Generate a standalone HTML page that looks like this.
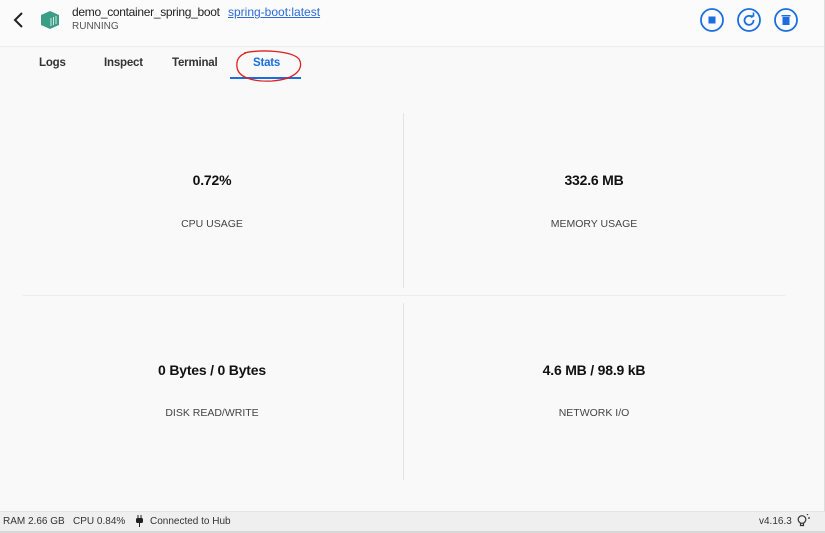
<!DOCTYPE html>
<html><head><meta charset="utf-8"><style>
*{margin:0;padding:0;box-sizing:border-box}
body{width:825px;height:533px;background:#f9f9f9;font-family:"Liberation Sans",sans-serif;position:relative;overflow:hidden;color:#222}
.a{position:absolute}
.v{font-size:14px;font-weight:bold;color:#111;text-align:center;width:380px;letter-spacing:-0.2px}
.l{font-size:10.5px;color:#444;text-align:center;width:380px}
.tab{font-size:11.5px;font-weight:bold;color:#333;top:57px;letter-spacing:-0.2px}
</style></head><body>
<div class="a" style="left:0;top:0;width:825px;height:47px;background:#fbfbfb;border-bottom:1px solid #ececec"></div>
<svg class="a" style="left:10px;top:10px" width="16" height="20"><path d="M12 3 L5 10 L12 17" stroke="#222" stroke-width="2" fill="none"/></svg>
<svg class="a" style="left:39px;top:10px" width="22" height="20"><polygon points="11,1 20,5 20,15 11,19 2,15 2,5" fill="#3a9e86"/><path d="M12 8v8M14.5 7v8M17 6v8" stroke="#cde9e1" stroke-width="1"/></svg>
<div class="a" style="left:72px;top:5px;font-size:12px;color:#222;letter-spacing:-0.3px">demo_container_spring_boot</div>
<div class="a" style="left:228px;top:5px;font-size:12px;color:#2a6cd6;text-decoration:underline">spring-boot:latest</div>
<div class="a" style="left:72px;top:21px;font-size:10px;color:#555">RUNNING</div>
<svg class="a" style="left:699px;top:7px" width="100" height="26" fill="none" stroke="#1a6ee0" stroke-width="1.8">
<circle cx="13" cy="13" r="11"/><rect x="9.5" y="9.5" width="7" height="7" fill="#1a6ee0" stroke="none"/>
<circle cx="50" cy="13" r="11"/><path d="M53.5 10.5 A4.5 4.5 0 1 0 54.5 13"/><path d="M51 9h3.5v-3.5" stroke-width="1.6"/>
<circle cx="87" cy="13" r="11"/><rect x="83.5" y="10" width="7" height="8" fill="#1a6ee0" stroke="none"/><rect x="82.5" y="8" width="9" height="1.5" fill="#1a6ee0" stroke="none"/>
</svg>
<div class="a tab" style="left:39px">Logs</div>
<div class="a tab" style="left:104px">Inspect</div>
<div class="a tab" style="left:172px">Terminal</div>
<div class="a tab" style="left:253px;color:#1a6ee0">Stats</div>
<div class="a" style="left:230px;top:77px;width:71px;height:2px;background:#1a6ee0"></div>
<svg class="a" style="left:232px;top:49px" width="74" height="36"><path d="M12 4 C30 0 60 2 67 10 C72 18 66 30 40 32 C20 33 6 28 5 18 C4 10 8 6 14 4" stroke="#e02020" stroke-width="1.3" fill="none"/></svg>
<div class="a" style="left:403px;top:113px;width:1px;height:175px;background:#e3e3e3"></div>
<div class="a" style="left:403px;top:303px;width:1px;height:177px;background:#e3e3e3"></div>
<div class="a" style="left:23px;top:295px;width:762px;height:1px;background:#ececec"></div>
<div class="a" style="left:824px;top:0;width:1px;height:512px;background:#ddd"></div>
<div class="a v" style="left:22px;top:172px">0.72%</div>
<div class="a l" style="left:22px;top:218px">CPU USAGE</div>
<div class="a v" style="left:404px;top:172px">332.6 MB</div>
<div class="a l" style="left:404px;top:218px">MEMORY USAGE</div>
<div class="a v" style="left:22px;top:362px">0 Bytes / 0 Bytes</div>
<div class="a l" style="left:22px;top:407px">DISK READ/WRITE</div>
<div class="a v" style="left:404px;top:362px">4.6 MB / 98.9 kB</div>
<div class="a l" style="left:404px;top:407px">NETWORK I/O</div>
<div class="a" style="left:0;top:511px;width:825px;height:20px;background:#efefef;border-top:1px solid #e4e4e4;font-size:10px;color:#333"></div>
<div class="a" style="left:0;top:531px;width:825px;height:2px;background:#d8d8d8"></div>
<div class="a" style="left:3px;top:516px;font-size:10px;color:#333">RAM 2.66 GB&nbsp;&nbsp;&nbsp;CPU 0.84%</div>
<svg class="a" style="left:135px;top:515px" width="9" height="12"><path d="M3 0v3M6 0v3" stroke="#222"/><rect x="1" y="3" width="7" height="5" rx="1.5" fill="#222"/><path d="M4.5 8v4" stroke="#222"/></svg>
<div class="a" style="left:150px;top:516px;font-size:10px;color:#333">Connected to Hub</div>
<div class="a" style="left:759px;top:516px;font-size:10px;color:#333">v4.16.3</div>
<svg class="a" style="left:796px;top:514px" width="14" height="14" fill="none" stroke="#333" stroke-width="1.2"><circle cx="6" cy="5.5" r="3.8"/><path d="M4.5 9.5v2h3v-2M11 1l1-1M12 4h2"/></svg>
</body></html>
